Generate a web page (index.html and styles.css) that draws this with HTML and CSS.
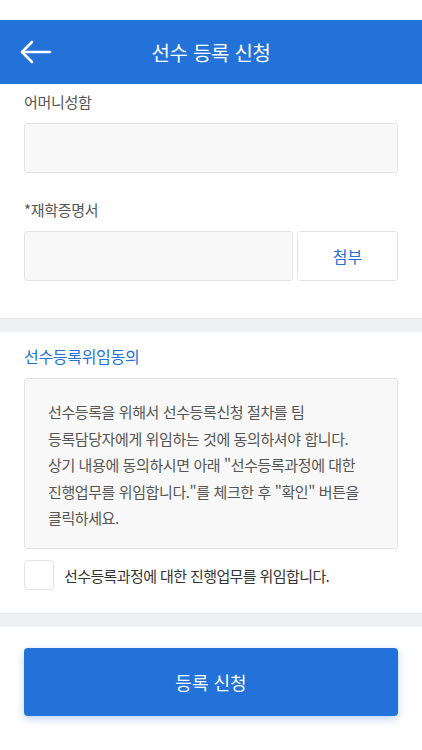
FILE: index.html
```html
<!DOCTYPE html>
<html lang="ko">
<head>
  <meta charset="UTF-8">
  <meta name="viewport" content="width=device-width, initial-scale=1.0">
  <title>선수 등록 신청</title>
  <link rel="stylesheet" href="styles.css">
</head>
<body>
  <div class="status-bar"></div>
  <header class="top-bar">
    <button class="back-button" aria-label="뒤로">
      <svg width="32" height="24" viewBox="0 0 32 24" fill="none" stroke="#fff" stroke-width="2.6" stroke-linecap="round" stroke-linejoin="round">
        <path d="M30 12H3"/>
        <path d="M12 2L2 12l10 10"/>
      </svg>
    </button>
    <h1>선수 등록 신청</h1>
  </header>

  <section class="form-section">
    <label class="field-label">어머니성함</label>
    <div class="input-box"></div>

    <label class="field-label second">*재학증명서</label>
    <div class="file-row">
      <div class="input-box"></div>
      <button class="attach-button">첨부</button>
    </div>
  </section>

  <div class="divider"></div>

  <section class="agree-section">
    <h2>선수등록위임동의</h2>
    <div class="agree-text">
      <p>선수등록을 위해서 선수등록신청 절차를 팀<br>등록담당자에게 위임하는 것에 동의하셔야 합니다.<br>상기 내용에 동의하시면 아래 "선수등록과정에 대한<br>진행업무를 위임합니다."를 체크한 후 "확인" 버튼을<br>클릭하세요.</p>
    </div>
    <label class="check-row">
      <span class="check-box"></span>
      <span>선수등록과정에 대한 진행업무를 위임합니다.</span>
    </label>
  </section>

  <div class="divider"></div>

  <div class="submit-wrap">
    <button class="submit-button">등록 신청</button>
  </div>
</body>
</html>
```

FILE: styles.css
```css
body {
  font-family: "Noto Sans CJK KR", "Noto Sans", sans-serif;
  background-color: #fff;
  color: #333;
  margin: 0;
  padding: 0;
  width: 422px;
}
.status-bar {
  height: 20px;
  background-color: #fff;
}
.top-bar {
  height: 64px;
  background-color: #2272d9;
  display: flex;
  align-items: center;
  justify-content: center;
  position: relative;
}
.back-button {
  position: absolute;
  left: 20px;
  top: 20px;
  background: none;
  border: none;
  padding: 0;
  cursor: pointer;
}
.top-bar h1 {
  margin: 0;
  font-size: 20px;
  font-weight: 400;
  color: #fff;
  letter-spacing: -0.3px;
}
.form-section {
  padding: 7px 24px 37px;
}
.field-label {
  display: block;
  font-size: 15px;
  color: #555;
  line-height: 22px;
  margin-bottom: 10px;
  letter-spacing: -0.3px;
}
.field-label.second {
  margin-top: 26px;
  margin-bottom: 10px;
}
.input-box {
  background-color: #f8f8f8;
  border: 1px solid #e3e3e3;
  border-radius: 3px;
  box-sizing: border-box;
  height: 50px;
}
.file-row {
  display: flex;
  gap: 4px;
}
.file-row .input-box {
  flex: 1;
}
.attach-button {
  width: 101px;
  height: 50px;
  background-color: #fff;
  border: 1px solid #e3e3e3;
  border-radius: 3px;
  font-family: inherit;
  font-size: 16px;
  color: #2272d9;
  cursor: pointer;
}
.divider {
  height: 13px;
  background-color: #eef0f3;
  border-top: 1px solid #e4e6ea;
}
.agree-section {
  padding: 12px 24px 23px;
}
.agree-section h2 {
  margin: 0 0 10px;
  font-size: 16px;
  font-weight: 400;
  color: #2272d9;
  line-height: 24px;
  letter-spacing: -0.3px;
}
.agree-text {
  background-color: #f8f8f8;
  border: 1px solid #e3e3e3;
  border-radius: 3px;
  height: 171px;
  box-sizing: border-box;
  padding: 20px 20px 0 23px;
}
.agree-text p {
  margin: 0;
  font-size: 15px;
  line-height: 26.6px;
  color: #555;
  letter-spacing: -0.4px;
}
.check-row {
  display: flex;
  align-items: center;
  gap: 10px;
  margin-top: 11px;
  font-size: 15px;
  color: #333;
  letter-spacing: -0.6px;
}
.check-box {
  width: 30px;
  height: 30px;
  box-sizing: border-box;
  border: 1px solid #e3e3e3;
  border-radius: 4px;
  background-color: #fff;
}
.submit-wrap {
  padding: 21px 24px 30px;
}
.submit-button {
  width: 100%;
  height: 68px;
  background-color: #2272d9;
  color: #fff;
  border: none;
  border-radius: 4px;
  font-family: inherit;
  font-size: 18px;
  box-shadow: 0 3px 8px rgba(34, 114, 217, 0.3);
  cursor: pointer;
}
```
